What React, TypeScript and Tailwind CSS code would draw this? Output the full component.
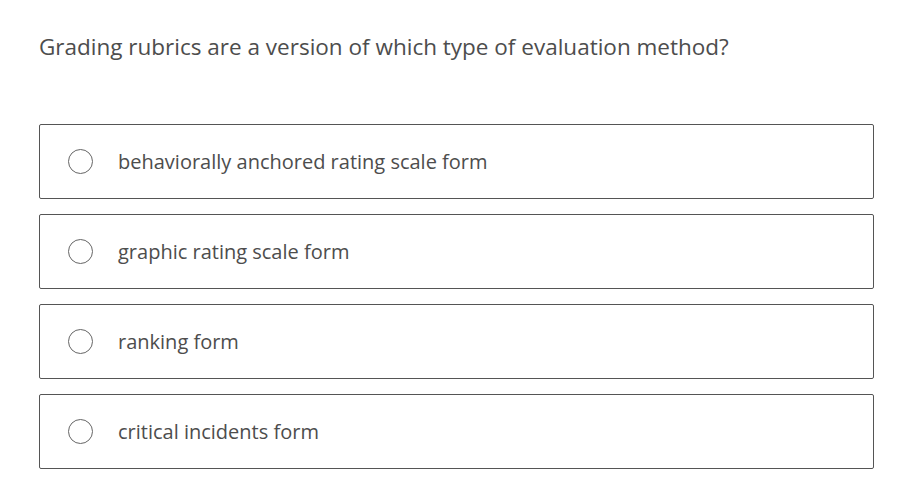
const options = [
  "behaviorally anchored rating scale form",
  "graphic rating scale form",
  "ranking form",
  "critical incidents form",
];

export default function App() {
  return (
    <div
      className="min-h-screen bg-white px-[39px] pt-[31px]"
      style={{ fontFamily: '"Open Sans", sans-serif' }}
    >
      <h1 className="text-[22.5px] leading-[32px] text-[#4d4d4d]">
        Grading rubrics are a version of which type of evaluation method?
      </h1>
      <div className="mt-[61px] flex w-[835px] flex-col gap-[15px]">
        {options.map((o) => (
          <label
            key={o}
            className="flex h-[75px] items-center rounded-[2px] border border-[#555] pl-[28px]"
          >
            <span className="h-[25px] w-[25px] shrink-0 rounded-full border border-[#666]" />
            <span className="ml-[25px] text-[20px] text-[#4d4d4d]">{o}</span>
          </label>
        ))}
      </div>
    </div>
  );
}
